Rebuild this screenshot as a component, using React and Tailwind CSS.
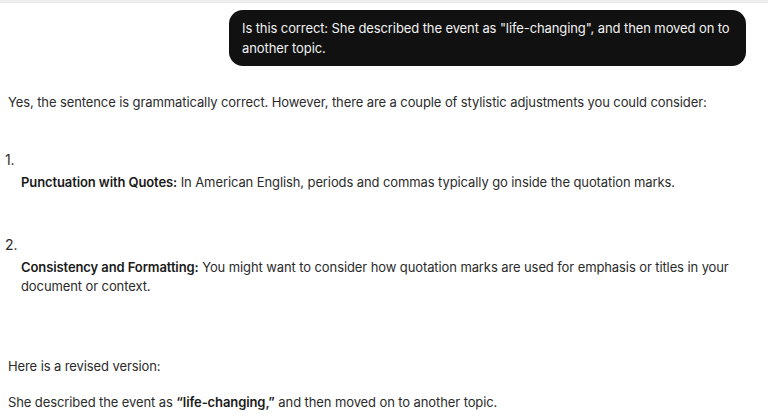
import React from 'react';

const font = { fontFamily: 'Inter, "Noto Sans", sans-serif' };

function ListItem({ num, title, gap, children }) {
  return (
    <div className={gap}>
      <div className="pl-[5px] text-[14px] leading-[20px]">{num}.</div>
      <p className="mt-[3px] pl-[21px] pr-[26px] leading-[19px]">
        <strong className="font-semibold text-[#1a1a1a]">{title}:</strong> {children}
      </p>
    </div>
  );
}

export default function App() {
  return (
    <div className="min-h-screen bg-white text-[13px] tracking-[-0.1px] text-[#2b2b2b]" style={font}>
      <div className="h-[3px] bg-[#ececec]" />

      {/* User bubble */}
      <div className="flex justify-end pr-[22px] pt-[7px]">
        <div className="w-[517px] rounded-[14px] bg-[#111111] px-[13px] py-[8px] leading-[20px] text-[#f2f2f2]">
          Is this correct: She described the event as "life-changing", and then moved on to another topic.
        </div>
      </div>

      {/* Assistant reply */}
      <div className="pt-[26px]">
        <p className="pl-[8px] leading-[20px]">
          Yes, the sentence is grammatically correct. However, there are a couple of stylistic adjustments you could consider:
        </p>

        <ListItem num="1" title="Punctuation with Quotes" gap="mt-[38px]">
          In American English, periods and commas typically go inside the quotation marks.
        </ListItem>

        <ListItem num="2" title="Consistency and Formatting" gap="mt-[43px]">
          You might want to consider how quotation marks are used for emphasis or titles in your document or context.
        </ListItem>

        <p className="mt-[60px] pl-[8px] leading-[20px]">Here is a revised version:</p>
        <p className="mt-[16px] pl-[8px] leading-[20px]">
          She described the event as <strong className="font-semibold text-[#1a1a1a]">“life-changing,”</strong> and then moved on to another topic.
        </p>
      </div>
    </div>
  );
}
